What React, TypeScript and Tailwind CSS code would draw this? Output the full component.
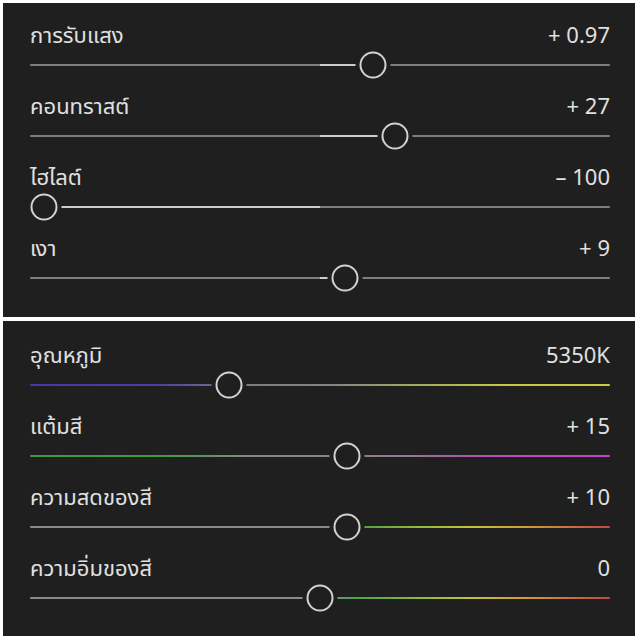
import React from "react";

type Slider = {
  label: string;
  value: string;
  pos: number; // percent along the track
  track?: string; // css gradient for coloured tracks
  fill?: boolean; // light fill from centre to thumb
};

const LIGHT: Slider[] = [
  { label: "การรับแสง", value: "+ 0.97", pos: 59.1, fill: true },
  { label: "คอนทราสต์", value: "+ 27", pos: 62.9, fill: true },
  { label: "ไฮไลต์", value: "– 100", pos: 2.4, fill: true },
  { label: "เงา", value: "+ 9", pos: 54.3, fill: true },
];

const COLOR: Slider[] = [
  {
    label: "อุณหภูมิ",
    value: "5350K",
    pos: 34.3,
    track:
      "linear-gradient(to right, #4438a8 0%, #4a40a0 22%, #7a7a84 36%, #858585 52%, #a4a860 66%, #c2ca42 82%, #c6cf40 100%)",
  },
  {
    label: "แต้มสี",
    value: "+ 15",
    pos: 54.7,
    track:
      "linear-gradient(to right, #3c9a44 0%, #44983e 22%, #7c8a7c 36%, #858585 55%, #9a6e9a 68%, #b84cb8 82%, #c044c4 100%)",
  },
  {
    label: "ความสดของสี",
    value: "+ 10",
    pos: 54.7,
    track:
      "linear-gradient(to right, #8a8a8a 0%, #8a8a8a 50%, #5aa048 58%, #8cb83c 66%, #c4c238 76%, #d09a38 86%, #c04848 100%)",
  },
  {
    label: "ความอิ่มของสี",
    value: "0",
    pos: 50,
    track:
      "linear-gradient(to right, #8a8a8a 0%, #8a8a8a 50%, #52a04c 56%, #86b840 66%, #c4c238 76%, #d09a38 86%, #c04848 100%)",
  },
];

function SliderRow({ s }: { s: Slider }) {
  const from = Math.min(50, s.pos);
  const to = Math.max(50, s.pos);
  return (
    <div className="mb-[12px]">
      <div className="flex items-center justify-between h-[28px] pt-[3px] text-[22px] text-[#e0e0e0] leading-none">
        <span>{s.label}</span>
        <span>{s.value}</span>
      </div>
      <div className="relative h-[30px] mt-px">
        <div
          className="absolute left-0 right-0 top-1/2 -translate-y-1/2 h-[2px] rounded-full bg-[#7e7e7e]"
          style={s.track ? { background: s.track } : undefined}
        />
        {s.fill && (
          <div
            className="absolute top-1/2 -translate-y-1/2 h-[2px] bg-[#cccccc]"
            style={{ left: `${from}%`, width: `${to - from}%` }}
          />
        )}
        <div
          className="absolute top-1/2 -translate-x-1/2 -translate-y-1/2 w-[27px] h-[27px] rounded-full border-[2.5px] border-[#d2d2d2] bg-[#1f1f1f] shadow-[0_0_0_4px_#1f1f1f]"
          style={{ left: `${s.pos}%` }}
        />
      </div>
    </div>
  );
}

function Panel({ items, className }: { items: Slider[]; className: string }) {
  return (
    <div className={`bg-[#1f1f1f] pl-[27px] pr-[25px] ${className}`}>
      {items.map((s) => (
        <SliderRow key={s.label} s={s} />
      ))}
    </div>
  );
}

export default function App() {
  return (
    <div
      className="w-[640px] h-[640px] bg-white pl-[3px] pr-[5px] pt-[3px] flex flex-col gap-[4px] overflow-hidden"
      style={{ fontFamily: '"Noto Sans Thai", "Noto Sans", "DejaVu Sans", sans-serif' }}
    >
      <Panel items={LIGHT} className="h-[314px] pt-[18px]" />
      <Panel items={COLOR} className="h-[315px] pt-[20px]" />
    </div>
  );
}
